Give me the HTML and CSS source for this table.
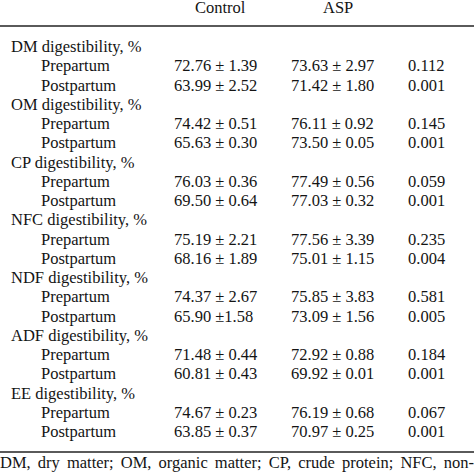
FILE: index.html
```html
<!DOCTYPE html>
<html>
<head>
<meta charset="utf-8">
<link rel="stylesheet" href="styles.css">
</head>
<body>
<div class="page">
  <div class="head">
    <div class="cell"></div>
    <div class="cell h-control">Control</div>
    <div class="cell h-asp">ASP</div>
    <div class="cell"></div>
  </div>
  <div class="body">
    <div class="grp">DM digestibility, %</div>
    <div class="sub">Prepartum</div><div>72.76 ± 1.39</div><div>73.63 ± 2.97</div><div>0.112</div>
    <div class="sub">Postpartum</div><div>63.99 ± 2.52</div><div>71.42 ± 1.80</div><div>0.001</div>
    <div class="grp">OM digestibility, %</div>
    <div class="sub">Prepartum</div><div>74.42 ± 0.51</div><div>76.11 ± 0.92</div><div>0.145</div>
    <div class="sub">Postpartum</div><div>65.63 ± 0.30</div><div>73.50 ± 0.05</div><div>0.001</div>
    <div class="grp">CP digestibility, %</div>
    <div class="sub">Prepartum</div><div>76.03 ± 0.36</div><div>77.49 ± 0.56</div><div>0.059</div>
    <div class="sub">Postpartum</div><div>69.50 ± 0.64</div><div>77.03 ± 0.32</div><div>0.001</div>
    <div class="grp">NFC digestibility, %</div>
    <div class="sub">Prepartum</div><div>75.19 ± 2.21</div><div>77.56 ± 3.39</div><div>0.235</div>
    <div class="sub">Postpartum</div><div>68.16 ± 1.89</div><div>75.01 ± 1.15</div><div>0.004</div>
    <div class="grp">NDF digestibility, %</div>
    <div class="sub">Prepartum</div><div>74.37 ± 2.67</div><div>75.85 ± 3.83</div><div>0.581</div>
    <div class="sub">Postpartum</div><div>65.90 ±1.58</div><div>73.09 ± 1.56</div><div>0.005</div>
    <div class="grp">ADF digestibility, %</div>
    <div class="sub">Prepartum</div><div>71.48 ± 0.44</div><div>72.92 ± 0.88</div><div>0.184</div>
    <div class="sub">Postpartum</div><div>60.81 ± 0.43</div><div>69.92 ± 0.01</div><div>0.001</div>
    <div class="grp">EE digestibility, %</div>
    <div class="sub">Prepartum</div><div>74.67 ± 0.23</div><div>76.19 ± 0.68</div><div>0.067</div>
    <div class="sub">Postpartum</div><div>63.85 ± 0.37</div><div>70.97 ± 0.25</div><div>0.001</div>
  </div>
  <p class="note">DM, dry matter; OM, organic matter; CP, crude protein; NFC, non-fibrous carbohydrates; NDF, neutral detergent fiber; ADF, acid detergent fiber; EE, ether extract.</p>
</div>
</body>
</html>
```

FILE: styles.css
```css
html, body {
  margin: 0;
  padding: 0;
  background: #fff;
}
body {
  width: 474px;
  height: 474px;
  overflow: hidden;
}
.page {
  font-family: "Liberation Serif", "Times New Roman", serif;
  font-size: 16.5px;
  line-height: 19.25px;
  color: #141414;
  height: 474px;
  overflow: hidden;
}
.head,
.body {
  display: grid;
  grid-template-columns: 174px 117px 117px 66px;
}
.head {
  line-height: 15px;
  padding-bottom: 10px;
  border-bottom: 2px solid #5a5a5a;
}
.h-control {
  padding-left: 21px;
}
.h-asp {
  padding-left: 32px;
}
.body {
  padding: 10px 0 10px;
  border-bottom: 2px solid #5a5a5a;
}
.grp {
  grid-column: 1 / -1;
  padding-left: 11px;
}
.sub {
  padding-left: 41px;
}
.note {
  margin: 0;
  text-align: justify;
}
```
